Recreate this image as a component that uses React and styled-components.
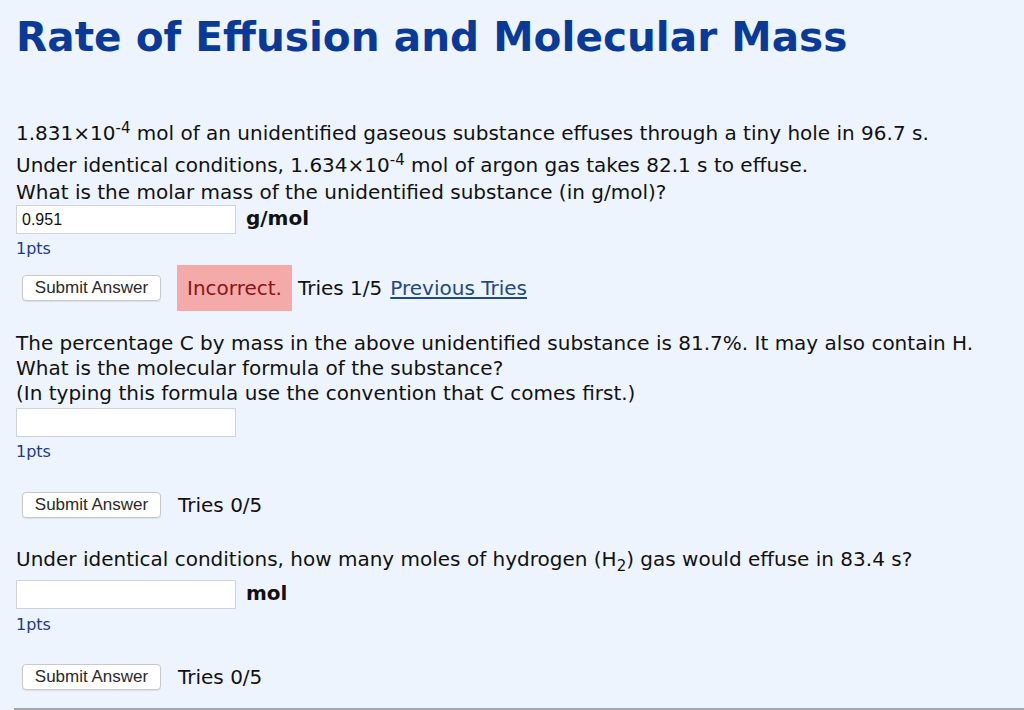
import React from "react";
import styled, { createGlobalStyle } from "styled-components";

const GlobalStyle = createGlobalStyle`
  html, body {
    margin: 0;
    padding: 0;
    background: #edf4fe;
  }
  body {
    font-family: "DejaVu Sans", Verdana, sans-serif;
    color: #111;
  }
`;

const Page = styled.div`
  padding: 0 16px;
  height: 710px;
  overflow: hidden;
`;

const Title = styled.h1`
  margin: 13px 0 0;
  font-size: 40.6px;
  line-height: 48px;
  font-weight: bold;
  color: #0a3a98;
`;

const Question = styled.div`
  margin-top: ${(p) => p.$top}px;
  font-size: 20px;
  line-height: 25px;
  color: #111;
`;

const Line = styled.div`
  margin-top: ${(p) => p.$mt || 0}px;
`;

const Sup = styled.sup`
  position: relative;
  top: -0.5em;
  vertical-align: baseline;
  font-size: 0.75em;
  line-height: 0;
`;

const Sub = styled.sub`
  position: relative;
  top: 0.3em;
  vertical-align: baseline;
  font-size: 0.75em;
  line-height: 0;
`;

const AnswerRow = styled.div`
  display: flex;
  align-items: center;
  gap: 10px;
  margin-top: ${(p) => p.$mt || 0}px;
`;

const AnswerInput = styled.input`
  box-sizing: border-box;
  width: 220px;
  height: 29px;
  margin: 0;
  padding: 0 5px;
  border: 1px solid #cfd3d8;
  background: #fff;
  font-family: "Liberation Sans", Arial, sans-serif;
  font-size: 16px;
  color: #111;
  outline: none;
`;

const Unit = styled.b`
  font-size: 20px;
  font-weight: bold;
  color: #111;
  margin-top: -4px;
`;

const Points = styled.div`
  margin-top: ${(p) => p.$mt || 5}px;
  font-size: 16px;
  line-height: 20px;
  color: #1b3b8f;
`;

const ActionRow = styled.div`
  display: flex;
  align-items: center;
  height: 46px;
  margin-top: ${(p) => p.$mt}px;
  font-size: 20px;
`;

const SubmitButton = styled.button`
  box-sizing: border-box;
  height: 26px;
  width: 139px;
  margin: 0 17px 0 6px;
  padding: 0;
  background: #fff;
  border: 1px solid #c9c9c9;
  border-radius: 4px;
  box-shadow: 0 1px 1px rgba(0, 0, 0, 0.08);
  font-family: "Liberation Sans", Arial, sans-serif;
  font-size: 17px;
  color: #2a2a2a;
`;

const Verdict = styled.span`
  display: flex;
  align-items: center;
  height: 46px;
  padding: 0 10px;
  margin-left: -1px;
  background: #f4aaa8;
  color: #8a1414;
`;

const Tries = styled.span`
  margin-left: ${(p) => (p.$afterVerdict ? 6 : 0)}px;
  color: #111;
`;

const TriesLink = styled.a`
  margin-left: 8px;
  color: #1d4a86;
  text-decoration: underline;
  text-underline-offset: 2px;
  cursor: pointer;
`;

const Rule = styled.div`
  margin: 8px -16px 0 -2px;
  height: 0;
  border-top: 2px solid #a7a7a7;
`;

export default function App() {
  return (
    <Page>
      <GlobalStyle />
      <Title>Rate of Effusion and Molecular Mass</Title>

      <Question $top={60}>
        <Line>
          1.831×10<Sup>-4</Sup> mol of an unidentified gaseous substance effuses through a tiny hole in 96.7 s.
        </Line>
        <Line $mt={7}>
          Under identical conditions, 1.634×10<Sup>-4</Sup> mol of argon gas takes 82.1 s to effuse.
        </Line>
        <Line $mt={2}>What is the molar mass of the unidentified substance (in g/mol)?</Line>
      </Question>
      <AnswerRow>
        <AnswerInput defaultValue="0.951" />
        <Unit>g/mol</Unit>
      </AnswerRow>
      <Points>1pts</Points>
      <ActionRow $mt={6}>
        <SubmitButton>Submit Answer</SubmitButton>
        <Verdict>Incorrect.</Verdict>
        <Tries $afterVerdict>Tries 1/5</Tries>
        <TriesLink>Previous Tries</TriesLink>
      </ActionRow>

      <Question $top={20}>
        <Line>
          The percentage C by mass in the above unidentified substance is 81.7%. It may also contain H.
        </Line>
        <Line>What is the molecular formula of the substance?</Line>
        <Line>(In typing this formula use the convention that C comes first.)</Line>
      </Question>
      <AnswerRow $mt={2}>
        <AnswerInput defaultValue="" />
      </AnswerRow>
      <Points>1pts</Points>
      <ActionRow $mt={20}>
        <SubmitButton>Submit Answer</SubmitButton>
        <Tries>Tries 0/5</Tries>
      </ActionRow>

      <Question $top={19}>
        <Line>
          Under identical conditions, how many moles of hydrogen (H<Sub>2</Sub>) gas would effuse in 83.4 s?
        </Line>
      </Question>
      <AnswerRow $mt={8}>
        <AnswerInput defaultValue="" />
        <Unit>mol</Unit>
      </AnswerRow>
      <Points $mt={6}>1pts</Points>
      <ActionRow $mt={19}>
        <SubmitButton>Submit Answer</SubmitButton>
        <Tries>Tries 0/5</Tries>
      </ActionRow>

      <Rule />
    </Page>
  );
}
